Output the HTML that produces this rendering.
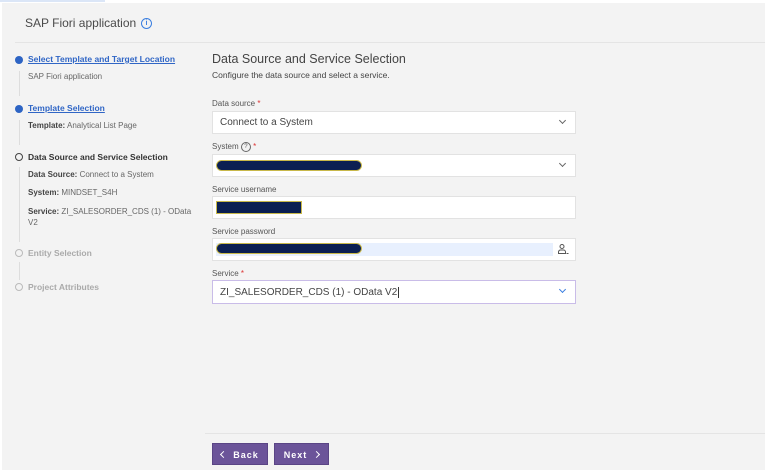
<!DOCTYPE html><html><head><style>
body{margin:0;width:768px;height:473px;background:#fff;font-family:"Liberation Sans",sans-serif;position:relative;overflow:hidden}
.a{position:absolute}
.panel{left:2px;top:3px;width:763px;height:467px;background:#f3f3f3}
.lbl{font-size:8px;color:#555}
.req{color:#d33}
.box{left:212px;width:364px;height:23px;background:#fff;border:1px solid #e2e2e2;box-sizing:border-box}
.chev{position:absolute;right:10px;top:6px;width:4px;height:4px;border-right:1px solid #666;border-bottom:1px solid #666;transform:rotate(45deg)}
.blk{background:#0b1f52;border:1.5px solid #c8b84a;box-sizing:border-box}
.st{font-size:8px;color:#666}
.st b{color:#444}
.btn{background:#6b5499;color:#fff;font-size:9px;font-weight:bold;height:22px;line-height:22px;text-align:center;letter-spacing:1px;border:1px solid #5a4585;box-sizing:border-box}
.bc{display:inline-block;width:4px;height:4px;border-left:1.5px solid #fff;border-bottom:1.5px solid #fff;vertical-align:middle;margin-top:-2px}
</style></head><body>
<div class="a" style="left:0;top:0;width:105px;height:2px;background:#dbe6f7"></div>
<div class="a panel"></div>
<div class="a" style="left:25px;top:16px;font-size:12px;color:#4a4a4a">SAP Fiori application</div>
<div class="a" style="left:141px;top:18px;width:9px;height:9px;border:1px solid #3a7ee0;border-radius:50%;color:#3a7ee0;font-size:7px;line-height:9px;text-align:center;font-weight:bold">i</div>
<div class="a" style="left:15px;top:42px;width:750px;height:1px;background:#e4e4e4"></div>
<div class="a" style="left:19px;top:71px;width:1px;height:25px;background:#ddd"></div>
<div class="a" style="left:19px;top:120px;width:1px;height:25px;background:#ddd"></div>
<div class="a" style="left:19px;top:167px;width:1px;height:75px;background:#ddd"></div>
<div class="a" style="left:19px;top:262px;width:1px;height:18px;background:#ddd"></div>
<div class="a" style="left:15px;top:56px;width:8px;height:8px;border-radius:50%;background:#2d64c4"></div>
<div class="a" style="left:28px;top:54px;font-size:8.5px;font-weight:bold;color:#3066c6;text-decoration:underline">Select Template and Target Location</div>
<div class="a st" style="left:28px;top:72px">SAP Fiori application</div>
<div class="a" style="left:15px;top:105px;width:8px;height:8px;border-radius:50%;background:#2d64c4"></div>
<div class="a" style="left:28px;top:103px;font-size:8.5px;font-weight:bold;color:#3066c6;text-decoration:underline">Template Selection</div>
<div class="a st" style="left:28px;top:121px"><b>Template:</b> Analytical List Page</div>
<div class="a" style="left:15px;top:153px;width:6px;height:6px;border-radius:50%;border:1px solid #444"></div>
<div class="a" style="left:28px;top:152px;font-size:8.5px;font-weight:bold;color:#333">Data Source and Service Selection</div>
<div class="a st" style="left:28px;top:170px"><b>Data Source:</b> Connect to a System</div>
<div class="a st" style="left:28px;top:188px"><b>System:</b> MINDSET_S4H</div>
<div class="a st" style="left:28px;top:206px;line-height:11px"><b>Service:</b> ZI_SALESORDER_CDS (1) - OData<br>V2</div>
<div class="a" style="left:15px;top:249px;width:6px;height:6px;border-radius:50%;border:1px solid #bbb"></div>
<div class="a" style="left:28px;top:248px;font-size:8.5px;font-weight:bold;color:#aaa">Entity Selection</div>
<div class="a" style="left:15px;top:283px;width:6px;height:6px;border-radius:50%;border:1px solid #bbb"></div>
<div class="a" style="left:28px;top:282px;font-size:8.5px;font-weight:bold;color:#aaa">Project Attributes</div>
<div class="a" style="left:212px;top:52px;font-size:12.5px;color:#444">Data Source and Service Selection</div>
<div class="a" style="left:212px;top:70px;font-size:8.5px;color:#444">Configure the data source and select a service.</div>
<div class="a lbl" style="left:212px;top:99px">Data source <span class="req">*</span></div>
<div class="a box" style="top:111px"><span style="position:absolute;left:7px;top:5px;font-size:10px;color:#444">Connect to a System</span><i class="chev"></i></div>
<div class="a lbl" style="left:212px;top:142px">System <span style="display:inline-block;width:8px;height:8px;border:1px solid #666;border-radius:50%;font-size:6px;text-align:center;line-height:8px;vertical-align:middle">?</span> <span class="req">*</span></div>
<div class="a box" style="top:154px"><i class="chev"></i></div>
<div class="a blk" style="left:216px;top:160px;width:146px;height:11px;border-radius:6px"></div>
<div class="a lbl" style="left:212px;top:185px">Service username</div>
<div class="a box" style="top:196px"></div>
<div class="a blk" style="left:216px;top:201px;width:86px;height:13px"></div>
<div class="a lbl" style="left:212px;top:227px">Service password</div>
<div class="a box" style="top:238px"></div>
<div class="a" style="left:216px;top:243px;width:337px;height:13px;background:#e8f0fe"></div>
<div class="a blk" style="left:216px;top:243px;width:146px;height:11px;border-radius:6px"></div>
<svg class="a" style="left:557px;top:243px" width="12" height="12" viewBox="0 0 12 12" fill="none" stroke="#555" stroke-width="1"><circle cx="5" cy="3.5" r="2"/><path d="M1.5 10.5v-1.5a2 2 0 0 1 2-2h3a2 2 0 0 1 2 2v1.5z"/><path d="M9.5 10.5h2"/></svg>
<div class="a lbl" style="left:212px;top:269px">Service <span class="req">*</span></div>
<div class="a box" style="top:280px;border-color:#c9bce8;height:24px"><span style="position:absolute;left:7px;top:6px;font-size:10px;color:#444">ZI_SALESORDER_CDS (1) - OData V2<span style="border-left:1px solid #333;margin-left:1px"></span></span><i class="chev" style="border-color:#3a7ee0"></i></div>
<div class="a" style="left:205px;top:433px;width:560px;height:1px;background:#e4e4e4"></div>
<div class="a btn" style="left:212px;top:443px;width:56px"><span class="bc" style="transform:rotate(45deg);margin-right:7px"></span>Back</div>
<div class="a btn" style="left:274px;top:443px;width:55px">Next<span class="bc" style="transform:rotate(-135deg);margin-left:7px"></span></div>
</body></html>
